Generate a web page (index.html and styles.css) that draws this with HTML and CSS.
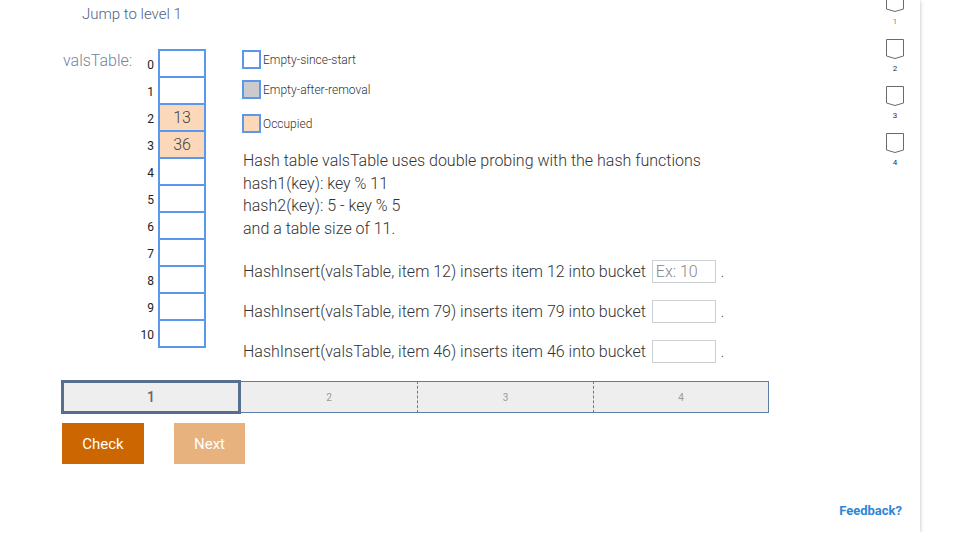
FILE: index.html
```html
<!DOCTYPE html>
<html>
<head>
<meta charset="utf-8">
<link rel="stylesheet" href="styles.css">
</head>
<body>
<div class="card">
  <div class="top">
    <div class="main">
      <div class="jump">Jump to level 1</div>
      <div class="work">
        <div class="tbl-wrap">
          <div class="tbl-label">valsTable:</div>
          <div class="tbl">
            <div class="row"><span class="idx">0</span><span class="cell"></span></div>
            <div class="row"><span class="idx">1</span><span class="cell"></span></div>
            <div class="row"><span class="idx">2</span><span class="cell occ">13</span></div>
            <div class="row"><span class="idx">3</span><span class="cell occ">36</span></div>
            <div class="row"><span class="idx">4</span><span class="cell"></span></div>
            <div class="row"><span class="idx">5</span><span class="cell"></span></div>
            <div class="row"><span class="idx">6</span><span class="cell"></span></div>
            <div class="row"><span class="idx">7</span><span class="cell"></span></div>
            <div class="row"><span class="idx">8</span><span class="cell"></span></div>
            <div class="row"><span class="idx">9</span><span class="cell"></span></div>
            <div class="row"><span class="idx">10</span><span class="cell"></span></div>
          </div>
        </div>
        <div class="right">
          <div class="legend">
            <div class="leg leg1"><span class="lbox"></span><span class="ltxt">Empty-since-start</span></div>
            <div class="leg leg2"><span class="lbox gray"></span><span class="ltxt">Empty-after-removal</span></div>
            <div class="leg leg3"><span class="lbox peach"></span><span class="ltxt">Occupied</span></div>
          </div>
          <p class="desc">Hash table valsTable uses double probing with the hash functions<br>hash1(key): key % 11<br>hash2(key): 5 - key % 5<br>and a table size of 11.</p>
          <div class="q"><span>HashInsert(valsTable, item 12) inserts item 12 into bucket</span><input class="ans" type="text" placeholder="Ex: 10"><span class="dot">.</span></div>
          <div class="q"><span>HashInsert(valsTable, item 79) inserts item 79 into bucket</span><input class="ans" type="text"><span class="dot">.</span></div>
          <div class="q"><span>HashInsert(valsTable, item 46) inserts item 46 into bucket</span><input class="ans" type="text"><span class="dot">.</span></div>
        </div>
      </div>
      <div class="progress">
        <div class="seg seg1">1</div>
        <div class="seg seg2">2</div>
        <div class="seg seg3">3</div>
        <div class="seg seg4">4</div>
      </div>
      <div class="buttons">
        <button class="btn check">Check</button>
        <button class="btn next">Next</button>
      </div>
    </div>
    <div class="aside">
      <div class="marker"><svg width="20" height="21" viewBox="0 0 20 21"><path d="M1.5 0.5 H18.5 V17 L10 19.5 L1.5 17 Z" fill="#fff" stroke="#6a6a6a" stroke-width="1"/></svg><span class="mlabel red">1</span></div>
      <div class="marker"><svg width="20" height="21" viewBox="0 0 20 21"><path d="M1.5 0.5 H18.5 V17 L10 19.5 L1.5 17 Z" fill="#fff" stroke="#6a6a6a" stroke-width="1"/></svg><span class="mlabel">2</span></div>
      <div class="marker"><svg width="20" height="21" viewBox="0 0 20 21"><path d="M1.5 0.5 H18.5 V17 L10 19.5 L1.5 17 Z" fill="#fff" stroke="#6a6a6a" stroke-width="1"/></svg><span class="mlabel">3</span></div>
      <div class="marker"><svg width="20" height="21" viewBox="0 0 20 21"><path d="M1.5 0.5 H18.5 V17 L10 19.5 L1.5 17 Z" fill="#fff" stroke="#6a6a6a" stroke-width="1"/></svg><span class="mlabel">4</span></div>
    </div>
  </div>
  <div class="footer"><a class="feedback">Feedback?</a></div>
</div>
</body>
</html>
```
FILE: styles.css
```css
html, body {
  margin: 0;
  padding: 0;
  background: #fff;
  font-family: Roboto, "Liberation Sans", sans-serif;
}
.card {
  width: 920px;
  height: 532px;
  background: #fff;
  box-shadow: 0 1px 4px rgba(0,0,0,0.28);
  overflow: hidden;
  display: flex;
  flex-direction: column;
}
.top {
  display: flex;
}
.main {
  flex: 1;
  padding-left: 61px;
  padding-top: 6px;
}
.jump {
  margin-left: 21px;
  font-size: 15px;
  font-weight: 300;
  line-height: 16px;
  color: #4f6285;
  margin-bottom: 27px;
}
.work {
  display: flex;
  height: 331px;
}
.tbl-wrap {
  display: flex;
  align-items: flex-start;
}
.tbl-label {
  width: 75px;
  margin-left: 2px;
  font-size: 16px;
  font-weight: 300;
  line-height: 24px;
  color: #6f84a6;
}
.tbl {
  display: flex;
  flex-direction: column;
}
.row {
  display: flex;
  align-items: center;
  margin-top: -2px;
}
.row:first-child {
  margin-top: 0;
}
.idx {
  width: 16px;
  text-align: right;
  font-size: 12px;
  color: #222;
  margin-right: 4px;
  padding-top: 2px;
}
.cell {
  width: 48px;
  height: 29px;
  box-sizing: border-box;
  border: 2px solid #5c97ee;
  font-size: 16px;
  font-weight: 300;
  color: #444;
  display: flex;
  align-items: center;
  justify-content: center;
}
.cell.occ {
  background: #fcd8ba;
}
.right {
  margin-left: 36px;
  display: flex;
  flex-direction: column;
}
.legend {
  display: flex;
  flex-direction: column;
  margin-top: 1px;
}
.leg {
  display: flex;
  align-items: center;
  height: 19px;
}
.leg1 { margin-bottom: 11px; }
.leg2 { margin-bottom: 15px; }
.lbox {
  width: 19px;
  height: 19px;
  box-sizing: border-box;
  border: 2px solid #5c97ee;
  background: #fff;
}
.lbox.gray { background: #cbcbcb; }
.lbox.peach { background: #fcd8ba; }
.ltxt {
  margin-left: 2px;
  font-size: 12px;
  font-weight: 300;
  color: #333;
}
.desc {
  margin: 17px 0 11px 1px;
  font-size: 16px;
  font-weight: 300;
  line-height: 22.7px;
  color: #333;
}
.q {
  display: flex;
  align-items: center;
  height: 40px;
  margin-left: 1px;
  font-size: 16px;
  font-weight: 300;
  color: #333;
}
.ans {
  width: 64px;
  height: 23px;
  box-sizing: border-box;
  margin-left: 6px;
  border: 1px solid #ccd0d4;
  padding: 0 3px;
  font-family: Roboto, "Liberation Sans", sans-serif;
  font-size: 16px;
  font-weight: 300;
  color: #444;
  outline: none;
}
.ans::placeholder {
  color: #888;
}
.dot {
  margin-left: 5px;
  font-size: 14px;
}
.progress {
  display: flex;
  align-items: center;
  width: 708px;
  height: 34px;
  margin-top: 0;
}
.seg {
  height: 32px;
  box-sizing: border-box;
  background: #eee;
  border-top: 1px solid #5b7ea6;
  border-bottom: 1px solid #5b7ea6;
  display: flex;
  align-items: center;
  justify-content: center;
  font-size: 10px;
  color: #999;
  width: 176px;
}
.seg1 {
  width: 180px;
  height: 34px;
  border: 3px solid #566f91;
  font-size: 14px;
  font-weight: 500;
  color: #666;
}
.seg3, .seg4 {
  border-left: 1px dashed #5b7ea6;
}
.seg4 {
  border-right: 1px solid #5b7ea6;
}
.buttons {
  display: flex;
  gap: 30px;
  margin-top: 9px;
  margin-left: 1px;
}
.btn {
  height: 41px;
  border: none;
  color: #fff;
  font-family: Roboto, "Liberation Sans", sans-serif;
  font-size: 15px;
  padding: 0;
}
.check {
  width: 82px;
  background: #cc6600;
}
.next {
  width: 71px;
  background: #e8b27f;
}
.aside {
  width: 20px;
  margin-right: 15px;
  margin-top: -8px;
  display: flex;
  flex-direction: column;
  align-items: center;
}
.marker {
  display: flex;
  flex-direction: column;
  align-items: center;
  height: 47px;
}
.marker svg {
  display: block;
}
.mlabel {
  font-size: 8px;
  line-height: 10px;
  margin-top: 4px;
  color: #333;
}
.mlabel.red {
  color: #e05a6a;
}
.footer {
  margin-top: auto;
  display: flex;
  justify-content: flex-end;
  padding: 0 18px 14px 0;
}
.feedback {
  font-size: 13px;
  font-weight: bold;
  color: #2d87d8;
  cursor: pointer;
}
```
